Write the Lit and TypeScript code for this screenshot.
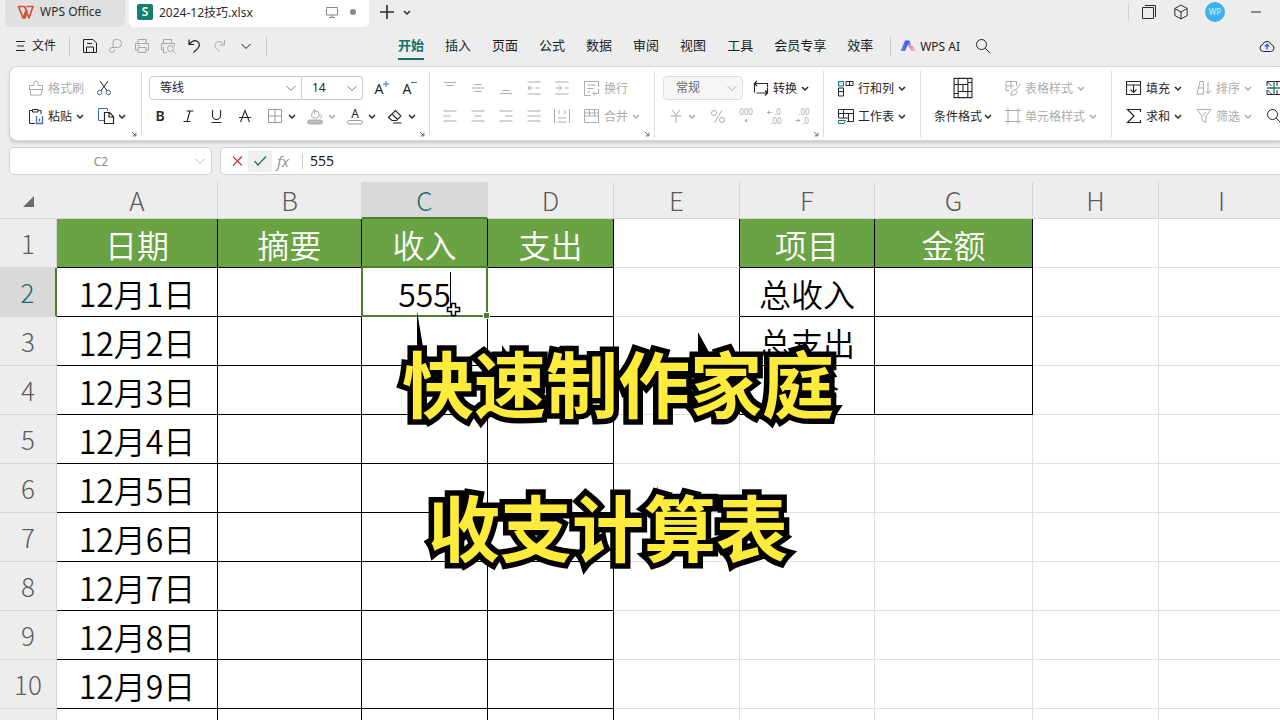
import { LitElement, html, svg, css, nothing } from "lit";
import { customElement, property, state } from "lit/decorators.js";
import { classMap } from "lit/directives/class-map.js";

/* Icon drawings on a 16 x 16 board, stroked with the current text colour. */
const icons: Record<string, unknown> = {
  caret: svg`<path d="M5 7l3 3 3-3" stroke-width="1.5"/>`,
  chevron: svg`<path d="M3.5 6l4.5 4.5L12.500 6"/>`,
  burger: svg`<path d="M4 3.500h9M5 8h7M4 12.500h9"/>`,
  save: svg`<path d="M1.500 1.500h9.500l3.500 3.500v9.500h-13zM4.500 14v-5h7v5M5 5.500h5"/>`,
  share: svg`<path d="M5 9.500V4a2.500 2.500 0 0 1 2.500-2.500h2a4 4 0 0 1 0 8H4a2.500 2.500 0 1 0 2.500 2.500V11"/>`,
  print: svg`<path d="M4 5V1.500h8V5M4 12H1.500V5.500h13V12H12M4 9.500h8v5H4zM3.500 7.500h2"/>`,
  preview: svg`<path d="M3.500 5V1.500h8V5M3.500 12H1.500V5.500h13V8M3.500 9v5.500H7"/><circle cx="10.500" cy="10.500" r="3"/><path d="M13 13l2.500 2.500"/>`,
  undo: svg`<path d="M3 1.500v5h5M3.500 6.200C6 3 9 2 11.500 3.500c2.600 1.800 2.300 4.800.3 6.900L7.500 14.500" stroke-width="1.200"/>`,
  redo: svg`<path d="M12.500 2v5h-5M12 6.500C9.500 3.500 6.500 3 4.500 4.500 2.200 6.300 2.600 9 4.500 10.800L7.500 13.500"/>`,
  plus: svg`<path d="M8 1v14M1 8h14" stroke-width="1.600"/>`,
  monitor: svg`<path d="M2.500 3.500h11v7.500h-11zM8 11v2.500M5 13.500h6"/>`,
  windows: svg`<path d="M1.500 3.500h11v11h-11zM4 1.500h10.500V13"/>`,
  cube: svg`<path d="M8 1l6.200 3.500v7L8 15l-6.200-3.500v-7zM1.800 4.500L8 8l6.200-3.500M8 8v7"/>`,
  minimise: svg`<path d="M3 8h10"/>`,
  search: svg`<circle cx="6.500" cy="6.500" r="5"/><path d="M10.200 10.200l5 5"/>`,
  cloud: svg`<path d="M4.500 13.500a3.500 3.500 0 0 1-.8-6.900 4.500 4.500 0 0 1 8.600 0 3.500 3.500 0 0 1-.8 6.900z"/><path d="M8 11.500V6.500M5.800 8.500L8 6.300l2.200 2.200" stroke="#4a5be0" stroke-width="1.400"/>`,
  brush: svg`<path d="M2.500 9.500v5.500h10.500l1.500-5.500M1.500 9.500v-4h4.500V3a2 2 0 0 1 4 0v2.500h4.500v4z"/>`,
  scissors: svg`<path d="M2 1l7.200 10M10 1L2.800 11"/><circle cx="1.700" cy="12.500" r="2.200" stroke="#3d6db0"/><circle cx="10.300" cy="12.500" r="2.200" stroke="#3d6db0"/>`,
  paste: svg`<path d="M4 2.500H1.500v13H7M10.500 2.500H13V6M4.500 1.500h5.500v2.500H4.500z"/><path d="M8.500 8v7.500h6V8M11.500 10.500v3" stroke="#3d6db0" stroke-width="1.300"/>`,
  copy: svg`<path d="M6 12.500H.5V.500h9V3" stroke="#3d6db0"/><path d="M6.500 4.500h5l4 4v7h-9zM11 4.500V9h4.500" stroke-width="1.200"/>`,
  bold: svg`<text x="8" y="13" font-size="14" font-weight="600">B</text>`,
  italic: svg`<path d="M6.500 3h7M3.500 13.500h7M10 3L7 13.500" stroke-width="1.100"/>`,
  underline: svg`<path d="M4.500 2v5.500a4 4 0 0 0 8 0V2M3.500 14.500h10" stroke-width="1.100"/>`,
  strike: svg`<path d="M4.500 14L9 2.500 13.500 14M3 9.500h12" stroke-width="1.100"/>`,
  bigger: svg`<text x="5" y="14" font-size="14">A</text><path d="M9 4h6M12 1v6" stroke="#3d6db0"/>`,
  smaller: svg`<text x="5" y="14" font-size="14">A</text><path d="M9 2.500h6" stroke="#3d6db0"/>`,
  borders: svg`<path d="M.500 1.500h13v13H.500zM7 1.500v13M.500 8h13"/>`,
  fill: svg`<path d="M5.500 2.500l5 1.500 1 4-3.500 2.500-4.500-2 .5-3.500zM6.500 1v5M12.500 6.500c1.500 1.500 1.500 3.500 0 3.500"/><rect x="-.500" y="12" width="15" height="4" rx="2" fill="#bdbdbd" stroke="#aaa"/>`,
  colour: svg`<text x="7" y="10" font-size="12">A</text><rect x="-.500" y="12.500" width="15" height="3.500" rx="1.700" stroke="#999"/>`,
  eraser: svg`<path d="M.500 9.500l7-7L13 8l-4.500 4.500H4zM4 6l5.500 5.500M5 15h8.500" stroke-width="1.100"/>`,
  top: svg`<path d="M2 2.500h12M4.500 5.500h7"/>`,
  middle: svg`<path d="M4.500 4.500h7M2 8h12M4.500 11.500h7"/>`,
  bottom: svg`<path d="M4.500 10.500h7M2 13.500h12"/>`,
  outdent: svg`<path d="M1.500 2h13M9.500 8h4M1.500 14h13M7 8H2M4.500 5.500L2 8l2.500 2.500"/>`,
  indent: svg`<path d="M1.500 2h13M10.500 8h4M1.500 14h13M2 8h5M5 5.500L7.500 8 5 10.500"/>`,
  left: svg`<path d="M1.500 3h13M1.500 8h7M1.500 13h13"/>`,
  center: svg`<path d="M1.500 3h13M4.500 8h7M1.500 13h13"/>`,
  right: svg`<path d="M1.500 3h13M7.500 8h7M1.500 13h13"/>`,
  justify: svg`<path d="M1.500 3h13M1.500 8h13M1.500 13h13"/>`,
  spread: svg`<path d="M.500 1v14M15.500 1v14M3.500 10h9M3.500 14h9M6 2L4 4l2 2M10 2l2 2-2 2"/>`,
  wrap: svg`<path d="M7 15.500H.500v-14h14V7M3.500 5h8M3.500 8.500h6M3.500 12h3M14.500 9v4.500H9M11 11.500l-2 2 2 2"/>`,
  merge: svg`<path d="M.500 1.500h14v13H.500zM.500 8h14M5.500 1.500V8M10.500 1.500V8M.500 5h14"/>`,
  convert: svg`<path d="M1.500 12.500v-9h13v4M14.500 8v5h-11M4 1L1.500 3.500 4 6M12 10.500l2.500 2.500-2.500 2.500" stroke-width="1.200"/>`,
  yen: svg`<path d="M4 2l4 4.500L12 2M2.500 8h11M8 6.500V15"/>`,
  percent: svg`<circle cx="4" cy="5" r="2.500"/><circle cx="12" cy="12" r="2.500"/><path d="M12 2L4.500 15"/>`,
  thousands: svg`<text x="8" y="7" font-size="8">000</text><path d="M8.500 11l-1 3" stroke-width="1.800"/>`,
  moreDecimals: svg`<path d="M1.500 4.500h4M3.500 2.500l-2 2 2 2"/><text x="11.500" y="7" font-size="8">.0</text><text x="10" y="15.500" font-size="8">.00</text>`,
  lessDecimals: svg`<text x="10" y="7" font-size="8">.00</text><path d="M1.500 12.500h4M3.500 10.500l2 2-2 2"/><text x="11.500" y="15.500" font-size="8">.0</text>`,
  rowsCols: svg`<path d="M8 1.500h7v4H8zM11.500 1.500v4M.500 8v8h5V8zM.500 11.500h5"/><rect x=".500" y="1.500" width="5" height="4.500" fill="#d6efec" stroke="#1f7a6e"/>`,
  sheet: svg`<path d="M.500 10V1.500h15v12H9M.500 5.500h15M5.500 1.500V10M10.500 5.500v8M.500 10h10"/><path d="M.500 12.500h7l-1.500 3H.500z" stroke="#1f7a6e"/>`,
  conditional: svg`<path d="M4 1H1.500v14H4M12 1h2.500v14H12M4.500 1h7v14h-7zM1.500 5.500h10M4.500 10.500h10M8 5.500v5M1.500 12h3M11.500 4h3" stroke-width=".8"/>`,
  tableStyle: svg`<path d="M1 10.500v-9h10.500V6M1 6h8M6 1.500V9M1 10.500h3M15.500 4l-5 6M10.500 10c2 1 1.500 3.500-.5 4.500-2 .8-3.500.5-4.500.5 1.500-1 .8-2.500 2-4 .8-1 2-1.500 3-1z"/>`,
  cellStyle: svg`<path d="M3 0v16M13 0v16M0 2.500h16M0 13.500h16"/>`,
  fillDown: svg`<path d="M.500 1.500h14v13H.500zM.500 5h14M7.500 5v7M4.500 9.500l3 3 3-3" stroke-width="1.100"/>`,
  sum: svg`<path d="M14.500 4V1.500h-13L8 8l-6.500 6.500h13V12" stroke-width="1.200"/>`,
  sort: svg`<path d="M1 14L4 1.500h3.500V14M2.500 8h5M1 14h7M12 2v11.500M9.800 11l2.200 2.500 3-3"/>`,
  filter: svg`<path d="M1 1.500h14L10 8v6.500l-4-2V8zM10 4l-3 4"/>`,
  freeze: svg`<path d="M1 1.500h14M1 1.500V6M1 14.500h14M1 14.500V10M1.500 2l4 4M1.500 10l4 4M11 1.500V6M11 10v4.500"/><path d="M1 8h15M8 1v14" stroke="#1f7a6e" stroke-width="1.300"/>`,
  cross: svg`<path d="M4 3.500l9 9M13 3.500l-9 9" stroke="#c0393f" stroke-width="1.200"/>`,
  tick: svg`<path d="M2.500 8l3.500 4L14 3.500" stroke="#1f7a4e" stroke-width="1.300"/>`,
  launcher: svg`<path d="M3 3l9 9M13 4.500V13H4.500" stroke-width="2.600"/>`,
};

const ico = (name: string, cls = "") =>
  html`<svg class="ico ${cls}" viewBox="0 0 16 16" aria-hidden="true">${icons[name]}</svg>`;

interface Tool {
  icon: string;
  name: string;
  text?: boolean;
  menu?: boolean;
  off?: boolean;
}

const t = (icon: string, name: string, flags = ""): Tool => ({
  icon,
  name,
  text: flags.includes("t"),
  menu: flags.includes("m"),
  off: flags.includes("o"),
});

const tool = (x: Tool, cls = "") => html`
  <button class="tool ${cls} ${x.off ? "off" : ""}" aria-label=${x.name} ?disabled=${x.off}>
    ${ico(x.icon)}${x.text ? html`<span>${x.name}</span>` : nothing}${x.menu ? html`<span class="caretbox">${ico("caret", "caret")}</span>` : nothing}
  </button>`;

const launcher = html`<button class="launcher" aria-label="更多设置">${ico("launcher")}</button>`;

const base = css`
  :host,
  * {
    box-sizing: border-box;
  }
  button,
  input,
  select {
    font: inherit;
    color: inherit;
    background: none;
    border: 0;
    padding: 0;
    margin: 0;
    opacity: 1;
  }
  .ico {
    width: 16px;
    height: 16px;
    flex: none;
    display: block;
    overflow: visible;
    fill: none;
    stroke: currentColor;
  }
  .ico text {
    fill: currentColor;
    stroke: none;
    text-anchor: middle;
    font-family: "Noto Sans", sans-serif;
  }
`;

@customElement("title-bar")
class TitleBar extends LitElement {
  static styles = [
    base,
    css`
      :host {
        display: flex;
        align-items: flex-start;
        height: 28px;
        padding-left: 5px;
        color: #2b2b2b;
      }
      .tab {
        display: flex;
        align-items: center;
        height: 27px;
        padding: 0 13px 4px;
        border-radius: 0 0 5px 5px;
        gap: 6px;
        flex: none;
      }
      .home {
        background: #e0e0e0;
        width: 120px;
        margin-right: 4px;
      }
      .doc {
        background: #fff;
        width: 240px;
        padding-left: 8px;
      }
      .title {
        flex: 1;
        text-align: left;
        white-space: nowrap;
      }
      .doc .ico {
        color: #888;
      }
      .doc .letter {
        fill: #fff;
      }
      .dot {
        width: 6px;
        height: 6px;
        border-radius: 50%;
        background: #8a8a8a;
        margin-left: 4px;
      }
      .icons {
        display: flex;
        align-items: center;
        height: 23px;
      }
      .new {
        margin-left: 10px;
        gap: 4px;
      }
      .right {
        margin-left: auto;
        padding-right: 16px;
        gap: 16px;
      }
      .sep {
        width: 1px;
        height: 18px;
        background: #cfcfcf;
        margin-right: -4px;
      }
      .avatar {
        width: 20px;
        height: 20px;
        border-radius: 50%;
        background: #3cb1ee;
        color: #d9f2ff;
        font-size: 8px;
        line-height: 20px;
      }
      .min {
        margin-left: 7px;
      }
    `,
  ];
  render() {
    return html`
      <button class="tab home">
        <svg class="ico" viewBox="0 0 16 16" aria-hidden="true">
          <path d="M.500 2.500h6l2.500 5-2 6.500h-2zM5 14L8 7l3 7 4-11.500H8.500" stroke="#dc4b34" stroke-width="1.700" stroke-linejoin="round" />
        </svg>
        <span class="title">WPS Office</span>
      </button>
      <button class="tab doc">
        <svg class="ico" viewBox="0 0 16 16" aria-hidden="true">
          <rect width="16" height="16" rx="2" fill="#14806a" stroke="none" />
          <text class="letter" x="8" y="12" font-size="12" font-weight="600">S</text>
        </svg>
        <span class="title">2024-12技巧.xlsx</span>
        ${ico("monitor")}<span class="dot"></span>
      </button>
      <div class="icons new">
        <button aria-label="新建">${ico("plus")}</button>
        <button aria-label="标签列表">${ico("caret")}</button>
      </div>
      <div class="icons right">
        <span class="sep"></span>
        <button aria-label="窗口">${ico("windows")}</button>
        <button aria-label="应用">${ico("cube")}</button>
        <button class="avatar">WP</button>
        <button class="min" aria-label="最小化">${ico("minimise")}</button>
      </div>
    `;
  }
}

@customElement("menu-bar")
class MenuBar extends LitElement {
  @state() private active = "开始";
  private tabs = ["开始", "插入", "页面", "公式", "数据", "审阅", "视图", "工具", "会员专享", "效率"];
  private quick = [
    t("save", "保存"),
    t("share", "分享", "o"),
    t("print", "打印", "o"),
    t("preview", "打印预览", "o"),
    t("undo", "撤销"),
    t("redo", "恢复", "o"),
    t("chevron", "更多"),
  ];
  static styles = [
    base,
    css`
      :host {
        display: flex;
        align-items: center;
        height: 38px;
        padding: 0 5px 2px 12px;
        color: #222;
        font-size: 13px;
      }
      .file {
        display: flex;
        align-items: center;
        gap: 4px;
        font-size: 12px;
        line-height: 16px;
        white-space: nowrap;
      }
      .sep {
        width: 1px;
        height: 18px;
        background: #c9c9c9;
        flex: none;
      }
      .quick {
        display: flex;
        margin: 0 7px;
      }
      .tool {
        width: 26px;
        display: flex;
        justify-content: center;
      }
      .off {
        color: #a9a9a9;
      }
      .tabs {
        display: flex;
        gap: 21px;
        margin-left: 131px;
        margin-right: 17px;
      }
      .tab {
        white-space: nowrap;
        height: 28px;
        line-height: 26px;
        border-bottom: 2px solid transparent;
      }
      .on {
        color: #17706a;
        font-weight: 700;
        border-color: #17706a;
      }
      .ai {
        display: flex;
        align-items: center;
        gap: 4px;
        font-size: 12px;
        margin: 0 15px 0 9px;
        white-space: nowrap;
      }
      .cloud {
        margin-left: auto;
      }
      .first {
        margin-left: 13px;
      }
    `,
  ];
  render() {
    return html`
      <button class="file">${ico("burger")}<span>文件</span></button>
      <span class="sep first"></span>
      <div class="quick">${this.quick.map((q) => tool(q))}</div>
      <span class="sep"></span>
      <nav class="tabs">
        ${this.tabs.map(
          (name) => html`<button
            class=${classMap({ tab: true, on: name === this.active })}
            @click=${() => (this.active = name)}
          >${name}</button>`
        )}
      </nav>
      <span class="sep"></span>
      <button class="ai">
        <svg class="ico" viewBox="0 0 16 16" aria-hidden="true">
          <defs>
            <linearGradient id="blue" x1="0" x2="1"><stop stop-color="#7d8cf5" /><stop offset="1" stop-color="#2544c8" /></linearGradient>
            <linearGradient id="pink" x1="0" x2="1" y1="0" y2="1"><stop stop-color="#e86fb8" /><stop offset="1" stop-color="#f7b7cf" /></linearGradient>
          </defs>
          <path d="M5 2.500h4.500L5 13H.500z" fill="url(#blue)" stroke="none" />
          <path d="M9.500 2.500l1.500 4-3 1.500-1-1z" fill="#5b8df7" stroke="none" />
          <path d="M8 7.500h4.500L15.500 13H11z" fill="url(#pink)" stroke="none" />
        </svg>
        <span>WPS AI</span>
      </button>
      <button aria-label="搜索">${ico("search")}</button>
      <button class="cloud" aria-label="云同步">${ico("cloud")}</button>
    `;
  }
}

@customElement("tool-ribbon")
class ToolRibbon extends LitElement {
  static styles = [
    base,
    css`
      :host {
        display: flex;
        align-items: center;
        height: 75px;
        margin-left: 9px;
        background: #fff;
        border: 1px solid #d6d6d6;
        border-right: 0;
        border-radius: 8px 0 0 8px;
        box-shadow: 0 2px 3px rgba(0, 0, 0, 0.14);
        overflow: hidden;
        color: #262626;
      }
      .group {
        display: flex;
        flex: none;
        height: 66px;
        border-right: 1px solid #dcdcdc;
      }
      .group:last-child {
        border-right: 0;
      }
      .rows {
        display: flex;
        flex-direction: column;
        justify-content: center;
        padding-bottom: 4px;
      }
      .row {
        display: flex;
        align-items: center;
        height: 28px;
      }
      .tool {
        display: flex;
        align-items: center;
        gap: 4px;
        white-space: nowrap;
        flex: none;
      }
      .cell {
        width: 28px;
        justify-content: center;
      }
      .off {
        color: #ababab;
      }
      .caretbox {
        width: 8px;
        display: flex;
        justify-content: center;
      }
      .soft > .ico {
        color: #999;
      }
      .launcher {
        align-self: flex-end;
        margin: 0 4px 0 auto;
        color: #666;
      }
      .launcher .ico {
        width: 6px;
        height: 6px;
      }
      .g1 {
        padding-left: 18px;
        width: 132px;
      }
      .g1 .row,
      .g7 .row {
        gap: 14px;
      }
      .g2 {
        padding-left: 4px;
        width: 288px;
      }
      .inset {
        padding-left: 3px;
      }
      .g3 {
        padding-left: 6px;
        width: 225px;
      }
      .g4 {
        padding-left: 8px;
        width: 169px;
      }
      .g5 {
        padding: 0 14px;
      }
      .g6 {
        padding: 0 14px 0 13px;
        gap: 13px;
      }
      .g7 {
        padding-left: 14px;
      }
      .wide {
        gap: 12px;
        padding-left: 10px;
      }
      .money {
        padding-left: 5px;
      }
      .digits {
        gap: 12px;
        padding-left: 14px;
      }
      .next {
        padding-left: 8px;
      }
      .swap {
        padding-left: 10px;
      }
      .pick {
        display: grid;
        height: 24px;
        border: 1px solid #cbcbcb;
        flex: none;
      }
      .pick > * {
        grid-area: 1 / 1;
      }
      .pick select {
        appearance: none;
        padding-left: 10px;
        width: 100%;
      }
      .pick .ico {
        justify-self: end;
        align-self: center;
        margin-right: 2px;
        color: #777;
        pointer-events: none;
      }
      .family {
        width: 153px;
        border-radius: 4px 0 0 4px;
      }
      .size {
        width: 61px;
        border-left: 0;
        border-radius: 0 4px 4px 0;
      }
      .format {
        width: 80px;
        background: #f6f6f6;
        border-color: #dedede;
        border-radius: 4px;
        color: #6b6b6b;
      }
      .format select {
        padding-left: 12px;
      }
      .format .ico {
        color: #b5b5b5;
      }
      .sizes {
        display: flex;
        gap: 12px;
        padding-left: 11px;
      }
      .big {
        display: flex;
        flex-direction: column;
        align-items: center;
        justify-content: center;
        padding-bottom: 4px;
      }
      .big .main {
        width: 22px;
        height: 22px;
        margin: 3px 0;
      }
      .label {
        display: flex;
        align-items: center;
        height: 28px;
        gap: 2px;
        white-space: nowrap;
      }
    `,
  ];
  render() {
    return html`
      <div class="group g1">
        <div class="rows">
          <div class="row">${tool(t("brush", "格式刷", "to"))}${tool(t("scissors", "剪切"))}</div>
          <div class="row">${tool(t("paste", "粘贴", "tm"))}${tool(t("copy", "复制", "m"))}</div>
        </div>
        ${launcher}
      </div>
      <div class="group g2">
        <div class="rows">
          <div class="row inset">
            <label class="pick family">
              <select aria-label="字体"><option>等线</option><option>宋体</option></select>${ico("chevron")}
            </label>
            <label class="pick size">
              <select aria-label="字号"><option>14</option><option>16</option></select>${ico("chevron")}
            </label>
            <div class="sizes">${tool(t("bigger", "增大字号"))}${tool(t("smaller", "减小字号"))}</div>
          </div>
          <div class="row">
            ${[t("bold", "加粗"), t("italic", "倾斜"), t("underline", "下划线"), t("strike", "删除线")].map((x) => tool(x, "cell"))}
            <div class="row wide">
              ${tool(t("borders", "边框", "m"), "soft")}${tool(t("fill", "填充颜色", "mo"))}
              ${tool(t("colour", "字体颜色", "m"))}${tool(t("eraser", "清除", "m"))}
            </div>
          </div>
        </div>
        ${launcher}
      </div>
      <div class="group g3">
        <div class="rows">
          <div class="row">
            ${[t("top", "顶端对齐", "o"), t("middle", "垂直居中", "o"), t("bottom", "底端对齐", "o"), t("outdent", "减少缩进", "o"), t("indent", "增加缩进", "o")].map((x) => tool(x, "cell"))}
            <div class="next">${tool(t("wrap", "换行", "to"))}</div>
          </div>
          <div class="row">
            ${[t("left", "左对齐", "o"), t("center", "居中", "o"), t("right", "右对齐", "o"), t("justify", "两端对齐", "o"), t("spread", "分散对齐", "o")].map((x) => tool(x, "cell"))}
            <div class="next">${tool(t("merge", "合并", "tmo"))}</div>
          </div>
        </div>
        ${launcher}
      </div>
      <div class="group g4">
        <div class="rows">
          <div class="row">
            <label class="pick format">
              <select aria-label="数字格式"><option>常规</option><option>数值</option></select>${ico("chevron")}
            </label>
            <div class="swap">${tool(t("convert", "转换", "tm"))}</div>
          </div>
          <div class="row money">
            ${tool(t("yen", "货币", "mo"))}
            <div class="row digits">
              ${tool(t("percent", "百分比", "o"))}${tool(t("thousands", "千位分隔", "o"))}
              ${tool(t("moreDecimals", "增加小数位", "o"))}${tool(t("lessDecimals", "减少小数位", "o"))}
            </div>
          </div>
        </div>
        ${launcher}
      </div>
      <div class="group g5">
        <div class="rows">
          <div class="row">${tool(t("rowsCols", "行和列", "tm"))}</div>
          <div class="row">${tool(t("sheet", "工作表", "tm"))}</div>
        </div>
      </div>
      <div class="group g6">
        <button class="big">
          ${ico("conditional", "main")}
          <span class="label">条件格式<span class="caretbox">${ico("caret")}</span></span>
        </button>
        <div class="rows">
          <div class="row">${tool(t("tableStyle", "表格样式", "tmo"))}</div>
          <div class="row">${tool(t("cellStyle", "单元格样式", "tmo"))}</div>
        </div>
      </div>
      <div class="group g7">
        <div class="rows">
          <div class="row">${tool(t("fillDown", "填充", "tm"))}${tool(t("sort", "排序", "tmo"))}${tool(t("freeze", "冻结"))}</div>
          <div class="row">${tool(t("sum", "求和", "tm"))}${tool(t("filter", "筛选", "tmo"))}${tool(t("search", "查找"))}</div>
        </div>
      </div>
    `;
  }
}

@customElement("formula-bar")
class FormulaBar extends LitElement {
  @property() cell = "";
  @property() value = "";
  static styles = [
    base,
    css`
      :host {
        display: flex;
        gap: 8px;
        padding: 6px 0 7px 9px;
      }
      .box {
        display: flex;
        align-items: center;
        height: 28px;
        background: #fff;
        border: 1px solid #d2d2d2;
        border-radius: 5px;
      }
      .name {
        width: 203px;
        padding-right: 3px;
        color: #8c8c8c;
        flex: none;
      }
      .name input {
        flex: 1;
        min-width: 0;
        text-align: center;
      }
      .name .ico {
        color: #c0c0c0;
      }
      .formula {
        flex: 1;
        min-width: 0;
        border-right: 0;
        border-radius: 5px 0 0 5px;
        padding-left: 5px;
      }
      .act {
        display: flex;
        align-items: center;
        justify-content: center;
        width: 22px;
        height: 22px;
        border-radius: 3px;
      }
      .ok {
        width: 24px;
        background: #efefef;
      }
      .fx {
        font-style: italic;
        font-size: 15px;
        color: #999;
      }
      .sep {
        width: 1px;
        height: 16px;
        background: #cfcfcf;
        margin: 0 7px 0 8px;
      }
      .formula input {
        flex: 1;
        min-width: 0;
        font-size: 14px;
        height: 22px;
        padding-bottom: 2px;
        color: #222;
      }
    `,
  ];
  render() {
    return html`
      <label class="box name">
        <input aria-label="名称框" .value=${this.cell} />${ico("chevron")}
      </label>
      <div class="box formula">
        <button class="act" aria-label="取消">${ico("cross")}</button>
        <button class="act ok" aria-label="输入">${ico("tick")}</button>
        <button class="act fx" aria-label="插入函数">fx</button>
        <span class="sep"></span>
        <input aria-label="编辑栏" .value=${this.value} />
      </div>
    `;
  }
}

@customElement("sheet-grid")
class SheetGrid extends LitElement {
  private cols = "ABCDEFGHIJKLMNOP".split("");
  private rows = Array.from({ length: 24 }, (_, i) => i + 1);
  private cells: Record<string, string> = {
    A1: "日期",
    B1: "摘要",
    C1: "收入",
    D1: "支出",
    F1: "项目",
    G1: "金额",
    F2: "总收入",
    F3: "总支出",
    F4: "结余",
  };

  static styles = [
    base,
    css`
      :host {
        display: block;
        overflow: hidden;
      }
      table {
        table-layout: fixed;
        width: 0;
        border-collapse: separate;
        border-spacing: 0;
        background: #fff;
        font-family: "Noto Sans CJK SC", sans-serif;
      }
      .w-head {
        width: 57px;
      }
      .w-A {
        width: 161px;
      }
      .w-B {
        width: 144px;
      }
      .w {
        width: 126px;
      }
      .w-F {
        width: 135px;
      }
      .w-G {
        width: 158px;
      }
      th,
      td {
        padding: 0;
        text-align: center;
        white-space: nowrap;
        border-right: 1px solid #e0e0e0;
        border-bottom: 1px solid #e0e0e0;
      }
      th {
        background: #ededed;
        color: #5c5c5c;
        font-weight: 300;
        font-size: 26px;
        line-height: 34px;
        border-color: #d6d6d6;
      }
      thead th {
        height: 37px;
      }
      tbody tr {
        height: 49px;
      }
      td {
        padding-top: 1px;
        font-size: 32px;
        line-height: 46px;
        font-weight: 350;
        color: #000;
      }
      .corner {
        border-right-color: #ededed;
      }
      .corner svg {
        width: 11px;
        height: 11px;
        display: block;
        margin: 2px auto 0;
      }
      .black-r {
        border-right-color: #000;
      }
      .black-b {
        border-bottom-color: #000;
      }
      .green {
        background: #6aa343;
        color: #fff;
      }
      thead .hot {
        background: #d9d9d9;
        color: #1d6b66;
        border-bottom: 2px solid #4b7f31;
      }
      tbody .hot {
        background: #d9d9d9;
        color: #1d6b66;
        border-right: 2px solid #4b7f31;
      }
      .edit {
        position: relative;
      }
      .edit input {
        display: block;
        width: 100%;
        height: 46px;
        text-align: center;
        outline: 0;
      }
      .frame {
        position: absolute;
        inset: -2px -1px -1px -1px;
        border: 2px solid #4b7f31;
        pointer-events: none;
      }
      .handle {
        position: absolute;
        right: -3px;
        bottom: -3px;
        width: 5px;
        height: 5px;
        background: #4b7f31;
        outline: 1px solid #fff;
      }
      .beam {
        position: absolute;
        left: 88px;
        top: 4px;
        width: 1px;
        height: 36px;
        background: #000;
      }
      .pointer {
        position: absolute;
        left: 84px;
        top: 34px;
        width: 15px;
        height: 15px;
      }
    `,
  ];

  private text(col: string, row: number) {
    if (col === "A" && row > 1) return `12月${row - 1}日`;
    return this.cells[col + row] ?? "";
  }

  private cell(col: string, row: number) {
    const left = "ABCD".includes(col);
    const right = "FG".includes(col) && row <= 4;
    const cls = {
      "black-b": left || right,
      "black-r": left || right || (col === "E" && row <= 4),
      green: row === 1 && (left || right),
    };
    if (col === "C" && row === 2) {
      return html`<td class=${classMap({ ...cls, edit: true })}>
        <input aria-label="C2" .value=${"555"} />
        <span class="frame"><span class="handle"></span></span>
        <span class="beam"></span>
        <svg class="pointer" viewBox="0 0 15 15" aria-hidden="true">
          <path d="M5.500 1.500h4v4h4v4h-4v4h-4v-4h-4v-4h4z" fill="#fff" stroke="#000" stroke-width="1.500" />
        </svg>
      </td>`;
    }
    return html`<td class=${classMap(cls)}>${this.text(col, row)}</td>`;
  }

  render() {
    const w = (c: string) => ("ABFG".includes(c) ? `w-${c}` : "w");
    return html`
      <table>
        <colgroup>
          <col class="w-head" />
          ${this.cols.map((c) => html`<col class=${w(c)} />`)}
        </colgroup>
        <thead>
          <tr>
            <th class="corner"><svg viewBox="0 0 11 11" aria-hidden="true"><path d="M11 0v11H0z" fill="#6a6a6a" /></svg></th>
            ${this.cols.map((c) => html`<th scope="col" class=${c === "C" ? "hot" : ""}>${c}</th>`)}
          </tr>
        </thead>
        <tbody>
          ${this.rows.map(
            (r) => html`<tr>
              <th scope="row" class=${r === 2 ? "hot" : ""}>${r}</th>
              ${this.cols.map((c) => this.cell(c, r))}
            </tr>`
          )}
        </tbody>
      </table>
    `;
  }
}

@customElement("app-root")
class AppRoot extends LitElement {
  static styles = css`
    :host {
      display: flex;
      flex-direction: column;
      height: 100vh;
      position: relative;
      overflow: hidden;
      background: #ededed;
      font-family: "Noto Sans", "Noto Sans CJK SC", sans-serif;
      font-size: 12px;
    }
    title-bar,
    menu-bar,
    tool-ribbon,
    formula-bar {
      flex: none;
    }
    sheet-grid {
      flex: 1;
      min-height: 0;
    }
    .caption {
      position: absolute;
      left: 402px;
      top: 309px;
      width: 432px;
      margin: 0;
      font-family: "Noto Sans CJK SC", sans-serif;
      font-size: 72px;
      font-weight: 700;
      line-height: 144px;
      color: #ffeb3b;
      -webkit-text-stroke: 11px #000;
      paint-order: stroke fill;
      white-space: nowrap;
      pointer-events: none;
    }
    .caption span {
      display: block;
      position: relative;
    }
    .second {
      padding-left: 26px;
    }
    .spikes {
      position: absolute;
      inset: 0;
      width: 432px;
      height: 288px;
    }
  `;
  render() {
    return html`
      <title-bar></title-bar>
      <menu-bar></menu-bar>
      <tool-ribbon></tool-ribbon>
      <formula-bar cell="C2" value="555"></formula-bar>
      <sheet-grid></sheet-grid>
      <p class="caption">
        <svg class="spikes" viewBox="0 0 432 288" aria-hidden="true">
          <path d="M15 2l7 42h-7zM296 23l12 22h-12zM100 36l6 9h-6zM255 177l3 10h-3z" />
        </svg>
        <span>快速制作家庭</span><span class="second">收支计算表</span>
      </p>
    `;
  }
}
